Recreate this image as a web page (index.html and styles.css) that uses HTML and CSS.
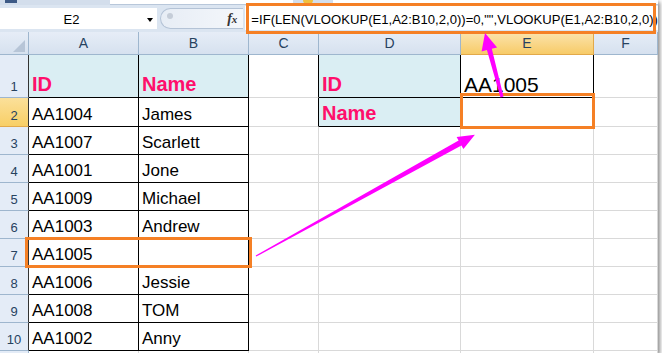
FILE: index.html
```html
<!DOCTYPE html>
<html lang="en">
<head>
<meta charset="UTF-8">
<title>VLOOKUP blank</title>
<link rel="stylesheet" href="styles.css">
</head>
<body>

<div class="app">
    <div class="ribbon-edge">
        <div class="rb-blue"><span class="rb-icon"></span></div>
        <div class="rb-white"></div>
        <div class="rb-blue short"><span class="rb-dot"></span></div>
        <div class="rb-white wide"></div>
    </div>

    <div class="bar">
        <div class="name-box">
            <span class="name">E2</span>
            <span class="drop"></span>
        </div>
        <div class="pill">
            <span class="knob"></span>
            <span class="fx">f<i>x</i></span>
        </div>
        <div class="formula">=IF(LEN(VLOOKUP(E1,A2:B10,2,0))=0,"",VLOOKUP(E1,A2:B10,2,0))</div>
    </div>

    <div class="sheet">
        <div class="corner"></div>
        <div class="ch">A</div>
        <div class="ch">B</div>
        <div class="ch">C</div>
        <div class="ch">D</div>
        <div class="ch sel">E</div>
        <div class="ch">F</div>

        <div class="rh dark">1</div>
        <div class="c t hd">ID</div>
        <div class="c t hd">Name</div>
        <div class="c edge"></div>
        <div class="c t hd">ID</div>
        <div class="c t big">AA1005</div>
        <div class="c"></div>

        <div class="rh dark sel">2</div>
        <div class="c t">AA1004</div>
        <div class="c t">James</div>
        <div class="c edge"></div>
        <div class="c t hd">Name</div>
        <div class="c t"></div>
        <div class="c"></div>

        <div class="rh dark">3</div>
        <div class="c t">AA1007</div>
        <div class="c t">Scarlett</div>
        <div class="c"></div>
        <div class="c"></div>
        <div class="c"></div>
        <div class="c"></div>

        <div class="rh dark">4</div>
        <div class="c t">AA1001</div>
        <div class="c t">Jone</div>
        <div class="c"></div>
        <div class="c"></div>
        <div class="c"></div>
        <div class="c"></div>

        <div class="rh dark">5</div>
        <div class="c t">AA1009</div>
        <div class="c t">Michael</div>
        <div class="c"></div>
        <div class="c"></div>
        <div class="c"></div>
        <div class="c"></div>

        <div class="rh dark">6</div>
        <div class="c t">AA1003</div>
        <div class="c t">Andrew</div>
        <div class="c"></div>
        <div class="c"></div>
        <div class="c"></div>
        <div class="c"></div>

        <div class="rh dark">7</div>
        <div class="c t">AA1005</div>
        <div class="c t"></div>
        <div class="c"></div>
        <div class="c"></div>
        <div class="c"></div>
        <div class="c"></div>

        <div class="rh dark">8</div>
        <div class="c t">AA1006</div>
        <div class="c t">Jessie</div>
        <div class="c"></div>
        <div class="c"></div>
        <div class="c"></div>
        <div class="c"></div>

        <div class="rh dark">9</div>
        <div class="c t">AA1008</div>
        <div class="c t">TOM</div>
        <div class="c"></div>
        <div class="c"></div>
        <div class="c"></div>
        <div class="c"></div>

        <div class="rh dark">10</div>
        <div class="c t">AA1002</div>
        <div class="c t">Anny</div>
        <div class="c"></div>
        <div class="c"></div>
        <div class="c"></div>
        <div class="c"></div>

        <div class="rh"></div>
        <div class="c"></div>
        <div class="c"></div>
        <div class="c"></div>
        <div class="c"></div>
        <div class="c"></div>
        <div class="c"></div>
    </div>

    <!-- highlights drawn over the sheet -->
    <div class="mark mark-formula"></div>
    <div class="mark mark-e2"></div>
    <div class="mark mark-row7"></div>

    <svg class="arrows" width="662" height="358" viewBox="0 0 662 358">
        <polygon points="255.7,255.4 458.6,140.6 456.6,136.9 474.9,134.8 463.4,149.1 461.4,145.5 256.3,256.6"/>
        <polygon points="500.5,97.4 486.9,50.1 481.6,51.5 485,33 497.1,47.4 491.8,48.8 503.5,96.6"/>
    </svg>
</div>

</body>
</html>
```

FILE: styles.css
```css
body {
    margin: 0;
    font-family: "Liberation Sans", Arial, sans-serif;
    background: #fff;
    overflow: hidden;
}
.app {
    position: relative;
    width: 658px;
    height: 353px;
    overflow: hidden;
    background: #dbe5f1;
    box-shadow: 2px 2px 4px rgba(0,0,0,.45);
}

/* bottom edge of the ribbon */
.ribbon-edge {
    display: flex;
    height: 5px;
}
.rb-blue {
    width: 110px;
    background: #d3deec;
    display: flex;
    padding-left: 5px;
    box-sizing: border-box;
}
.rb-blue.short {
    width: 40px;
    padding-left: 10px;
}
.rb-icon {
    width: 12px;
    height: 3px;
    background: #3d5a86;
}
.rb-dot {
    width: 10px;
    height: 4px;
    border-radius: 0 0 5px 5px;
    background: #f0c040;
}
.rb-white {
    width: 183px;
    background: #fff;
    border-bottom: 1px solid #b8c7da;
    box-sizing: border-box;
}
.rb-white.wide {
    flex: 1;
}

/* formula bar */
.bar {
    display: flex;
    height: 27px;
}
.name-box {
    margin-top: 3px;
    width: 157px;
    height: 21px;
    background: #fff;
    display: flex;
}
.name {
    width: 143px;
    text-align: center;
    font-size: 13px;
    line-height: 22px;
    padding-top: 1px;
    color: #000;
}
.drop {
    margin: 10px 0 0 4px;
    width: 0;
    height: 0;
    border-left: 3.5px solid transparent;
    border-right: 3.5px solid transparent;
    border-top: 4px solid #000;
}
.pill {
    margin: 3px 0 0 3px;
    width: 84px;
    height: 21px;
    box-sizing: border-box;
    border: 1px solid #b4c3d6;
    border-right: none;
    border-radius: 11px 0 0 11px;
    background: linear-gradient(90deg, #e7edf5, #f4f7fb);
    display: flex;
    align-items: center;
    justify-content: space-between;
    padding: 0 6px 0 6px;
}
.knob {
    width: 6px;
    height: 6px;
    border-radius: 50%;
    background: #c5cdd8;
    margin-top: -5px;
}
.fx {
    font-family: "Liberation Serif", serif;
    font-style: italic;
    font-weight: bold;
    font-size: 14px;
    color: #333;
}
.fx i {
    font-size: 11px;
}
.formula {
    margin: 1px 0 0 2px;
    flex: 1;
    height: 24px;
    box-sizing: border-box;
    padding: 2px 0 0 6px;
    background: #fff;
    font-size: 13.1px;
    line-height: 24px;
    white-space: nowrap;
    color: #000;
}

/* sheet grid */
.sheet {
    display: grid;
    grid-template-columns: 29px 110px 110px 70px 142px 133px 1fr;
    grid-template-rows: 23px 43px 29px repeat(8, 28px) 1fr;
    height: 321px;
    background: #fff;
}
.corner, .ch {
    background: linear-gradient(#e6edf7, #d6e1ef);
    border-right: 1px solid #9eb6ce;
    border-bottom: 1px solid #9eb6ce;
}
.corner {
    display: flex;
    justify-content: flex-end;
    align-items: flex-end;
    padding: 0 3px 2px 0;
}
.corner::after {
    content: "";
    width: 12px;
    height: 12px;
    background: #b7c5d7;
    clip-path: polygon(100% 0, 100% 100%, 0 100%);
}
.ch {
    display: flex;
    justify-content: center;
    align-items: center;
    font-size: 14px;
    color: #27425f;
}
.ch.sel {
    background: linear-gradient(#fbe4ae, #f7cb68);
    border-right-color: #e2a94a;
    border-bottom-color: #e2a94a;
}
.rh {
    background: #e4ecf7;
    border-right: 1px solid #9eb6ce;
    border-bottom: 1px solid #9eb6ce;
    display: flex;
    justify-content: center;
    align-items: flex-end;
    font-size: 13px;
    line-height: 16px;
    padding-bottom: 2px;
    color: #27425f;
}
.rh.dark {
    border-right-color: #333;
}
.rh.sel {
    background: linear-gradient(#fbe09a, #f8cf66);
    border-bottom-color: #e2a94a;
}
.c {
    border-right: 1px solid #d9d9d9;
    border-bottom: 1px solid #d9d9d9;
    display: flex;
    align-items: flex-end;
    padding: 0 0 1px 3px;
    font-size: 17px;
    line-height: 20px;
    color: #000;
    white-space: nowrap;
}
.c.t {
    border-color: #000;
}
.c.edge {
    border-right-color: #000;
}
.c.big {
    font-size: 21px;
    line-height: 24px;
    padding-bottom: 0;
}
.c.hd {
    background: #daeef3;
    color: #ff0f6b;
    font-weight: bold;
    font-size: 20px;
    line-height: 22px;
    padding-bottom: 2px;
}

/* orange highlight boxes */
.mark {
    position: absolute;
    border: 3px solid #f58025;
    box-sizing: border-box;
}
.mark-formula {
    left: 246px;
    top: 3px;
    width: 410px;
    height: 31px;
}
.mark-e2 {
    left: 460px;
    top: 93px;
    width: 135px;
    height: 36px;
}
.mark-row7 {
    left: 25px;
    top: 237px;
    width: 227px;
    height: 31px;
}

.arrows {
    position: absolute;
    left: 0;
    top: 0;
    fill: #ff00ff;
}
```
